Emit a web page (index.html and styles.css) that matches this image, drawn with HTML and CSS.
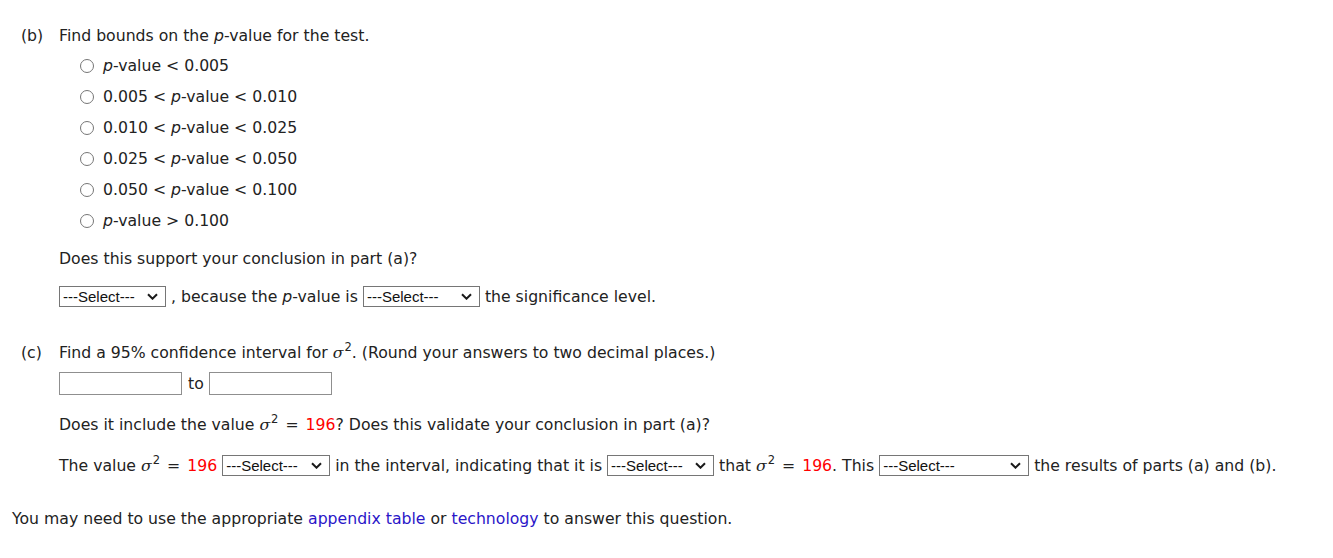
FILE: index.html
```html
<!DOCTYPE html>
<html>
<head>
<meta charset="utf-8">
<link rel="stylesheet" href="styles.css">
</head>
<body>
<div class="page">
  <div class="part part-b">
    <div class="label">(b)</div>
    <div class="content">
      <div class="line">Find bounds on the <i>p</i>-value for the test.</div>
      <div class="radios">
        <label class="radio-row"><input type="radio" name="pv"><span><i>p</i>-value &lt; 0.005</span></label>
        <label class="radio-row"><input type="radio" name="pv"><span>0.005 &lt; <i>p</i>-value &lt; 0.010</span></label>
        <label class="radio-row"><input type="radio" name="pv"><span>0.010 &lt; <i>p</i>-value &lt; 0.025</span></label>
        <label class="radio-row"><input type="radio" name="pv"><span>0.025 &lt; <i>p</i>-value &lt; 0.050</span></label>
        <label class="radio-row"><input type="radio" name="pv"><span>0.050 &lt; <i>p</i>-value &lt; 0.100</span></label>
        <label class="radio-row"><input type="radio" name="pv"><span><i>p</i>-value &gt; 0.100</span></label>
      </div>
      <div class="line q1">Does this support your conclusion in part (a)?</div>
      <div class="sel-row r1">
        <span class="sel-wrap w107"><select class="sel"><option>---Select---</option></select><svg class="chev" viewBox="0 0 11 7"><path d="M1 1.2l4.5 4.5 4.5-4.5"/></svg></span>
        <span>, because the <i>p</i>-value is</span>
        <span class="sel-wrap w117"><select class="sel"><option>---Select---</option></select><svg class="chev" viewBox="0 0 11 7"><path d="M1 1.2l4.5 4.5 4.5-4.5"/></svg></span>
        <span>the significance level.</span>
      </div>
    </div>
  </div>
  <div class="part part-c">
    <div class="label">(c)</div>
    <div class="content">
      <div class="line">Find a 95% confidence interval for <i class="sig">σ</i><sup>2</sup>. (Round your answers to two decimal places.)</div>
      <div class="inputs">
        <input type="text" class="num">
        <span class="to">to</span>
        <input type="text" class="num">
      </div>
      <div class="line q2">Does it include the value <i class="sig">σ</i><sup>2</sup> <span class="eq">=</span> <span class="red">196</span>? Does this validate your conclusion in part (a)?</div>
      <div class="sel-row r2">
        <span>The value <i class="sig">σ</i><sup>2</sup> <span class="eq">=</span> <span class="red">196</span></span>
        <span class="sel-wrap w108"><select class="sel"><option>---Select---</option></select><svg class="chev" viewBox="0 0 11 7"><path d="M1 1.2l4.5 4.5 4.5-4.5"/></svg></span>
        <span>in the interval, indicating that it is</span>
        <span class="sel-wrap w107"><select class="sel"><option>---Select---</option></select><svg class="chev" viewBox="0 0 11 7"><path d="M1 1.2l4.5 4.5 4.5-4.5"/></svg></span>
        <span>that <i class="sig">σ</i><sup>2</sup> <span class="eq">=</span> <span class="red">196</span>. This</span>
        <span class="sel-wrap w150"><select class="sel"><option>---Select---</option></select><svg class="chev" viewBox="0 0 11 7"><path d="M1 1.2l4.5 4.5 4.5-4.5"/></svg></span>
        <span>the results of parts (a) and (b).</span>
      </div>
    </div>
  </div>
  <div class="footer">You may need to use the appropriate <a href="#" class="link">appendix table</a> or <a href="#" class="link">technology</a> to answer this question.</div>
</div>
</body>
</html>
```

FILE: styles.css
```css
html, body {
  margin: 0;
  padding: 0;
  background: #fff;
}
body {
  font-family: "DejaVu Sans", Verdana, sans-serif;
  font-size: 15.7px;
  color: #222;
}
.page {
  padding-top: 26px;
}
.part {
  display: flex;
  padding-left: 21px;
}
.label {
  width: 38px;
  flex: none;
  line-height: 20px;
}
.content {
  display: flex;
  flex-direction: column;
}
.line {
  line-height: 20px;
  white-space: nowrap;
}
.radios {
  display: flex;
  flex-direction: column;
  margin-top: 4px;
  padding-left: 20px;
}
.radio-row {
  display: flex;
  align-items: center;
  height: 31px;
  white-space: nowrap;
}
.radio-row input {
  margin: 0 9px 0 1px;
  width: 14px;
  height: 14px;
}
.q1 {
  margin-top: 13px;
}
.sel-row {
  display: flex;
  align-items: center;
  height: 24px;
  gap: 5px;
  white-space: nowrap;
}
.r1 {
  margin-top: 15px;
}
.sel-wrap {
  position: relative;
  display: inline-flex;
  height: 21px;
}
.sel {
  -webkit-appearance: none;
  appearance: none;
  width: 100%;
  height: 21px;
  font-family: "Liberation Sans", Arial, sans-serif;
  font-size: 15px;
  color: #111;
  border: 1px solid #767676;
  border-radius: 0;
  background: #fff;
  padding: 0 0 0 3px;
  margin: 0;
}
.chev {
  position: absolute;
  right: 8px;
  top: 7px;
  width: 11px;
  height: 7px;
  fill: none;
  stroke: #1a1a1a;
  stroke-width: 2;
  pointer-events: none;
}
.w107 { width: 107px; }
.w108 { width: 108px; }
.w117 { width: 117px; }
.w150 { width: 150px; }
.part-c {
  margin-top: 35px;
}
.inputs {
  display: flex;
  align-items: center;
  margin-top: 9px;
  height: 23px;
}
.num {
  width: 123px;
  height: 23px;
  box-sizing: border-box;
  border: 1px solid #8f8f8f;
  border-radius: 0;
  margin: 0;
  padding: 0 2px;
}
.to {
  margin: 0 5px 0 6px;
}
.q2 {
  margin-top: 20px;
}
.r2 {
  margin-top: 18px;
}
.sig {
  font-family: "DejaVu Serif", serif;
}
sup {
  font-size: 11.5px;
  line-height: 0;
  vertical-align: 7px;
  margin-left: 1px;
}
.eq {
  padding: 0 2px;
}
.red {
  color: #f00;
}
.footer {
  margin-top: 32px;
  padding-left: 12px;
  line-height: 20px;
  white-space: nowrap;
}
.link {
  color: #2a16c8;
  text-decoration: none;
}
```
